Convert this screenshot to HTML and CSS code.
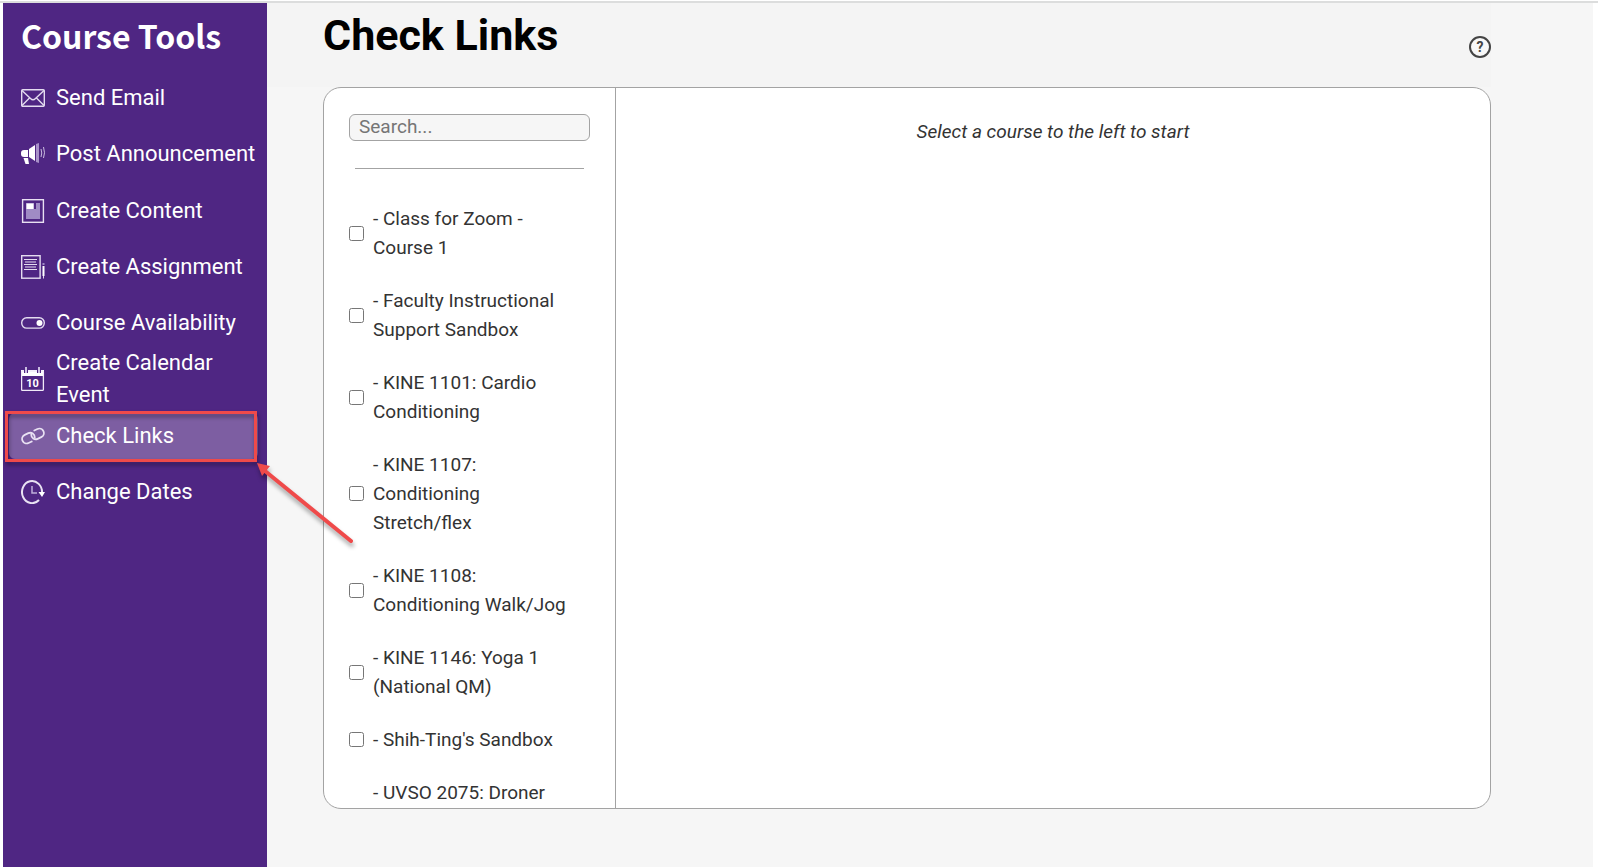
FILE: index.html
```html
<!DOCTYPE html>
<html lang="en">
<head>
    <meta charset="UTF-8">
    <meta name="viewport" content="width=device-width, initial-scale=1.0">
    <title>Course Tools - Check Links</title>
    <link rel="stylesheet" href="styles.css">
</head>
<body>

<div class="app">
    <aside class="sidebar">
        <h2 class="sidebar-title">Course Tools</h2>
        <nav>
            <ul class="tools">
                <li>
                    <a class="tool" href="#">
                        <svg class="tool-icon" viewBox="0 0 24 24" fill="none" stroke="#e4dcf0" stroke-width="1.4">
                            <rect x="0.7" y="3.7" width="22.6" height="16.6" rx="1"/>
                            <path d="M1 4.5l8.5 8c1.5 1.5 3.5 1.5 5 0l8.5-8M1 19.5l7.5-7.5M23 19.5l-7.5-7.5"/>
                        </svg>
                        <span>Send Email</span>
                    </a>
                </li>
                <li>
                    <a class="tool" href="#">
                        <svg class="tool-icon" viewBox="0 0 24 24" fill="#fff">
                            <path d="M7 8v7H3a3 3 0 0 1-3-3v-1a3 3 0 0 1 3-3z"/>
                            <path d="M8 7l6-4v16l-6-4z"/>
                            <path d="M15 2l3-1v20l-3-1z" fill="#a890c8"/>
                            <path d="M2.5 16H7l1 6H4.5z"/>
                            <path d="M20 7q1.5 4 0 8M22.5 5q2 6 0 11" fill="none" stroke="#cbbde0"/>
                        </svg>
                        <span>Post Announcement</span>
                    </a>
                </li>
                <li>
                    <a class="tool" href="#">
                        <svg class="tool-icon" viewBox="0 0 24 24">
                            <rect x="1.6" y="0.7" width="20.8" height="22.6" fill="none" stroke="#e8e0f2" stroke-width="1.4"/>
                            <rect x="5" y="4" width="14" height="16" fill="#a08bc4"/>
                            <rect x="13" y="4" width="2" height="6" fill="#4f2683"/>
                            <rect x="5.5" y="4.5" width="7" height="5.5" fill="#fff"/>
                        </svg>
                        <span>Create Content</span>
                    </a>
                </li>
                <li>
                    <a class="tool" href="#">
                        <svg class="tool-icon" viewBox="0 0 24 24" fill="none" stroke="#e4dcf0" stroke-width="1.4">
                            <rect x="0.7" y="0.7" width="18.4" height="22.5"/>
                            <path d="M3 4.5h13M4 7h11M3 9.5h13M4 12h11M3 14.5h13" stroke-width="1"/>
                            <path d="M22.5 8v2" stroke="#a08bc4" stroke-width="2"/>
                            <path d="M22.5 11v10" stroke="#fff" stroke-width="2"/>
                            <path d="M22.5 21v2.5" stroke-width="1"/>
                        </svg>
                        <span>Create Assignment</span>
                    </a>
                </li>
                <li>
                    <a class="tool" href="#">
                        <svg class="tool-icon" viewBox="0 0 24 24">
                            <rect x="0.7" y="6.7" width="22.6" height="10.4" rx="5" fill="none" stroke="#e4dcf0" stroke-width="1.4"/>
                            <circle cx="18.5" cy="11.9" r="3" fill="#fff"/>
                        </svg>
                        <span>Course Availability</span>
                    </a>
                </li>
                <li>
                    <a class="tool" href="#">
                        <svg class="tool-icon" viewBox="0 0 24 24">
                            <path d="M0 3h23v6H0z" fill="#fff"/>
                            <rect x="0.6" y="4" width="21.8" height="19.4" rx="1" fill="none" stroke="#f0eaf7" stroke-width="1.3"/>
                            <path d="M5 1v5M18 1v5" stroke="#4f2683" stroke-width="4"/>
                            <path d="M5 0v6M18 0v6" stroke="#cbbde0" stroke-width="2"/>
                            <text class="icon-day" x="11.5" y="20" text-anchor="middle">10</text>
                        </svg>
                        <span>Create Calendar Event</span>
                    </a>
                </li>
                <li>
                    <a class="tool active" href="#">
                        <svg class="tool-icon" viewBox="0 0 24 24" fill="none" stroke="#e9e2f3" stroke-width="1.8" stroke-linecap="round">
                            <g transform="rotate(-25 12 12)">
                                <path d="M8.5 16.500H5a4.500 4.500 0 0 1 0-9h4a4.500 4.500 0 0 1 4 6.500"/>
                                <path d="M15.500 7.500H19a4.500 4.500 0 0 1 0 9h-4a4.500 4.500 0 0 1-4-6.500"/>
                            </g>
                        </svg>
                        <span>Check Links</span>
                    </a>
                </li>
                <li>
                    <a class="tool" href="#">
                        <svg class="tool-icon" viewBox="0 0 24 24" fill="none" stroke="#e9e2f3" stroke-width="2">
                            <path d="M18 20A10 11 0 1 1 21 13"/>
                            <path d="M11 6v7h5" stroke="#c0aedb" stroke-width="1.5"/>
                            <path d="M17.5 12H24l-3 5z" fill="#fff" stroke="none"/>
                        </svg>
                        <span>Change Dates</span>
                    </a>
                </li>
            </ul>
        </nav>
    </aside>

    <main class="main">
        <header class="page-header">
            <h1>Check Links</h1>
            <button class="help" type="button" aria-label="Help">?</button>
        </header>

        <div class="panel">
            <section class="courses">
                <input class="search" type="text" placeholder="Search..." aria-label="Search">
                <hr>
                <ul class="course-list">
                    <li class="course">
                        <input type="checkbox" id="course1">
                        <label for="course1">- Class for Zoom - Course 1</label>
                    </li>
                    <li class="course">
                        <input type="checkbox" id="course2">
                        <label for="course2">- Faculty Instructional Support Sandbox</label>
                    </li>
                    <li class="course">
                        <input type="checkbox" id="course3">
                        <label for="course3">- KINE 1101: Cardio Conditioning</label>
                    </li>
                    <li class="course">
                        <input type="checkbox" id="course4">
                        <label for="course4">- KINE 1107: Conditioning Stretch/flex</label>
                    </li>
                    <li class="course">
                        <input type="checkbox" id="course5">
                        <label for="course5">- KINE 1108: Conditioning Walk/Jog</label>
                    </li>
                    <li class="course">
                        <input type="checkbox" id="course6">
                        <label for="course6">- KINE 1146: Yoga 1 (National QM)</label>
                    </li>
                    <li class="course">
                        <input type="checkbox" id="course7">
                        <label for="course7">- Shih-Ting's Sandbox</label>
                    </li>
                    <li class="course tall">
                        <input type="checkbox" id="course8">
                        <label for="course8">- UVSO 2075: Droner</label>
                    </li>
                </ul>
            </section>
            <section class="details">
                <p>Select a course to the left to start</p>
            </section>
        </div>
    </main>
</div>

<!-- callout pointing at the active tool -->
<div class="callout-box"></div>
<svg class="callout-arrow" width="110" height="95" viewBox="0 0 110 95">
    <path d="M10 11L96 81" stroke="#ef4a4a" stroke-width="4" stroke-linecap="round"/>
    <path d="M2 3l13 3-8 10z" fill="#ef4a4a"/>
</svg>

</body>
</html>
```
FILE: styles.css
```css
:root {
    --purple: #4f2683;
    --purple-light: #7d5ea2;
    --line: #a3a3a3;
    --red: #ef4a4a;
}

* {
    box-sizing: border-box;
}

body {
    margin: 0;
    padding-top: 1px;
    font-family: Roboto, Arial, sans-serif;
    font-size: 19px;
    color: #333;
    background: white;
}

ul {
    list-style: none;
    margin: 0;
    padding: 0;
}

.app {
    display: flex;
    height: calc(100vh - 1px);
    padding: 0 5px 0 3px;
    border-top: 2px solid #dcdddd;
    overflow: hidden;
}

.sidebar {
    flex: 0 0 264px;
    padding: 7px 9px 0 6px;
    background: var(--purple);
    color: white;
}

.sidebar-title {
    margin: 0 0 10px 12px;
    font-family: "Noto Sans CJK JP", "Noto Sans", sans-serif;
    font-size: 32px;
    font-weight: bold;
    line-height: 50px;
}

.tools {
    display: grid;
    grid-auto-rows: 1fr;
    align-items: center;
    height: 450px;
}

.tool {
    display: flex;
    align-items: center;
    gap: 11px;
    height: 46px;
    padding-left: 12px;
    border-radius: 6px;
    color: white;
    font-size: 22px;
    line-height: 32px;
    text-decoration: none;
}

.tool.active {
    background: var(--purple-light);
}

.tool-icon {
    flex: none;
    width: 24px;
    height: 24px;
}

.icon-day {
    fill: white;
    font-size: 11px;
    font-weight: bold;
}

.main {
    flex: 1;
    padding-right: 102px;
    background: #f6f6f6;
}

.page-header {
    display: flex;
    justify-content: space-between;
    height: 84px;
    padding-left: 56px;
    background: #f4f4f4;
}

h1 {
    margin: 0;
    font-size: 43px;
    line-height: 64px;
    color: black;
}

.help {
    width: 22px;
    height: 22px;
    margin-top: 33px;
    padding: 0;
    border: 2px solid #444;
    border-radius: 50%;
    background: #f8f8f8;
    color: #444;
    font-family: inherit;
    font-size: 14px;
    font-weight: bold;
    line-height: 18px;
    cursor: pointer;
}

.panel {
    display: flex;
    height: calc(100vh - 145px);
    margin-left: 56px;
    border: 1px solid var(--line);
    border-radius: 18px;
    background: white;
    overflow: hidden;
}

.courses {
    flex: 0 0 292px;
    padding: 26px 25px 0;
    border-right: 1px solid var(--line);
}

.search {
    display: block;
    width: 100%;
    height: 27px;
    padding: 0 9px 2px;
    border: 1px solid var(--line);
    border-radius: 6px;
    background: #f6f6f6;
    font-family: inherit;
    font-size: 19px;
}

.search::placeholder {
    color: #757575;
}

hr {
    margin: 27px 6px 35px;
    border: 0;
    border-top: 1px solid var(--line);
}

.course-list {
    display: flex;
    flex-direction: column;
    gap: 24px;
}

.course {
    display: flex;
    align-items: center;
    gap: 9px;
    line-height: 29px;
}

.course input {
    flex: none;
    width: 15px;
    height: 15px;
    margin: 0;
}

.course label {
    max-width: 200px;
}

.course.tall {
    min-height: 87px;
}

.course.tall label {
    align-self: flex-start;
}

.details {
    flex: 1;
    text-align: center;
}

.details p {
    margin: 29px 0;
    font-style: italic;
    line-height: 29px;
}

.callout-box {
    position: absolute;
    top: 411px;
    left: 5px;
    width: 252px;
    height: 51px;
    border: 3px solid var(--red);
    filter: drop-shadow(1px 3px 2px rgba(0, 0, 0, 0.4));
    pointer-events: none;
}

.callout-arrow {
    position: absolute;
    top: 460px;
    left: 255px;
    filter: drop-shadow(1px 4px 2px rgba(0, 0, 0, 0.35));
    pointer-events: none;
}
```
